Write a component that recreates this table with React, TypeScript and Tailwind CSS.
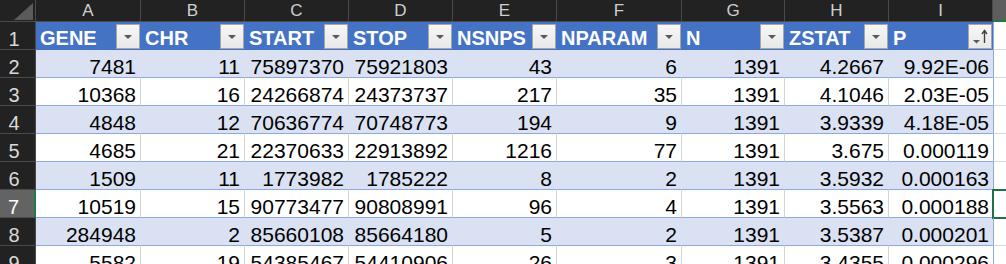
const cols = [
  { key: "A", name: "GENE", w: "w-[105px]" },
  { key: "B", name: "CHR", w: "w-[104px]" },
  { key: "C", name: "START", w: "w-[104px]" },
  { key: "D", name: "STOP", w: "w-[104px]" },
  { key: "E", name: "NSNPS", w: "w-[104px]" },
  { key: "F", name: "NPARAM", w: "w-[125px]" },
  { key: "G", name: "N", w: "w-[103px]" },
  { key: "H", name: "ZSTAT", w: "w-[104px]" },
  { key: "I", name: "P", w: "w-[104px]" },
];

const rows = [
  ["7481", "11", "75897370", "75921803", "43", "6", "1391", "4.2667", "9.92E-06"],
  ["10368", "16", "24266874", "24373737", "217", "35", "1391", "4.1046", "2.03E-05"],
  ["4848", "12", "70636774", "70748773", "194", "9", "1391", "3.9339", "4.18E-05"],
  ["4685", "21", "22370633", "22913892", "1216", "77", "1391", "3.675", "0.000119"],
  ["1509", "11", "1773982", "1785222", "8", "2", "1391", "3.5932", "0.000163"],
  ["10519", "15", "90773477", "90808991", "96", "4", "1391", "3.5563", "0.000188"],
  ["284948", "2", "85660108", "85664180", "5", "2", "1391", "3.5387", "0.000201"],
  ["5582", "19", "54385467", "54410906", "26", "3", "1391", "3.4355", "0.000296"],
];

const font = { fontFamily: '"Liberation Sans", Arial, sans-serif' };

function FilterButton({ sorted }: { sorted?: boolean }) {
  return (
    <div className="absolute right-[1px] top-[2px] w-[24px] h-[25px] border border-[#a6a6a6] bg-gradient-to-b from-[#f7f7f7] to-[#e8e8e8] flex items-center justify-center">
      {sorted ? (
        <svg width="22" height="23" viewBox="0 0 22 23">
          <polygon points="4,15 11,15 7.5,18.5" fill="#595959" />
          <line x1="15.5" y1="6" x2="15.5" y2="18" stroke="#404040" strokeWidth="1.4" />
          <polyline points="13,9 15.5,5.5 18,9" fill="none" stroke="#404040" strokeWidth="1.4" />
        </svg>
      ) : (
        <svg width="10" height="6" viewBox="0 0 10 6">
          <polygon points="1,1 9,1 5,5" fill="#595959" />
        </svg>
      )}
    </div>
  );
}

export default function App() {
  return (
    <div className="w-[1006px] h-[264px] overflow-hidden bg-white flex flex-col" style={font}>
      {/* column letters */}
      <div className="flex h-[22px] shrink-0 bg-[#222222]">
        <div className="w-[36px] h-full border-r border-b border-[#4a4a4a] relative shrink-0">
          <svg className="absolute inset-0" width="36" height="22" viewBox="0 0 36 22">
            <polygon points="33,3 33,20 14,20" fill="#5b5b5b" />
          </svg>
        </div>
        {cols.map((c) => (
          <div
            key={c.key}
            className={`${c.w} shrink-0 h-full border-r border-b border-[#4a4a4a] flex items-center justify-center text-[17px] leading-[21px] text-[#cfcfcf]`}
          >
            {c.key}
          </div>
        ))}
        <div className="flex-1 h-full bg-[#5e5e5e] border-b-2 border-[#1e7b45]" />
      </div>

      {/* row 1: table headers */}
      <div className="flex h-[28px] shrink-0">
        <div className="w-[36px] shrink-0 h-full bg-[#222222] border-r border-b border-[#4a4a4a] flex items-end justify-center pr-[7px] text-[20px] leading-[20px] text-[#d9d9d9]">
          1
        </div>
        {cols.map((c, i) => (
          <div
            key={c.key}
            className={`${c.w} shrink-0 h-full bg-[#4472c4] relative flex items-end pl-[4px] pb-[2px] text-[20px] leading-[20px] font-bold text-white`}
          >
            {c.name}
            <FilterButton sorted={i === cols.length - 1} />
          </div>
        ))}
        <div className="flex-1 h-full border-l border-[#8ea9db] border-b border-b-[#d9d9d9]" />
      </div>

      {/* data rows */}
      {rows.map((r, ri) => {
        const band = ri % 2 === 0;
        const selected = ri === 5;
        return (
          <div key={ri} className="flex h-[28px] shrink-0">
            <div
              className={`w-[36px] shrink-0 h-full border-b border-[#4a4a4a] flex items-end justify-center pr-[7px] text-[20px] leading-[20px] ${
                selected
                  ? "bg-[#636363] text-white border-r-2 border-r-[#1e7b45]"
                  : "bg-[#222222] text-[#d9d9d9] border-r border-r-[#4a4a4a]"
              }`}
            >
              {ri + 2}
            </div>
            {cols.map((c, ci) => (
              <div
                key={c.key}
                className={`${c.w} shrink-0 h-full border-b border-b-[#8ea9db] flex items-end justify-end pr-[4px] text-[21px] leading-[21px] text-black ${
                  band ? "bg-[#d9e1f2]" : "bg-white"
                } ${ci < cols.length - 1 && !band ? "border-r border-r-[#d4d4d4]" : ""} ${
                  ci < cols.length - 1 && band ? "border-r border-r-[#d9e1f2]" : ""
                }`}
              >
                {r[ci]}
              </div>
            ))}
            <div className="relative flex-1 h-full border-l border-l-[#8ea9db] border-b border-b-[#d9d9d9]">
              {selected && (
                <div className="absolute left-[-2px] top-[-1px] w-[30px] h-[30px] border-2 border-[#1e7145]" />
              )}
            </div>
          </div>
        );
      })}
    </div>
  );
}
